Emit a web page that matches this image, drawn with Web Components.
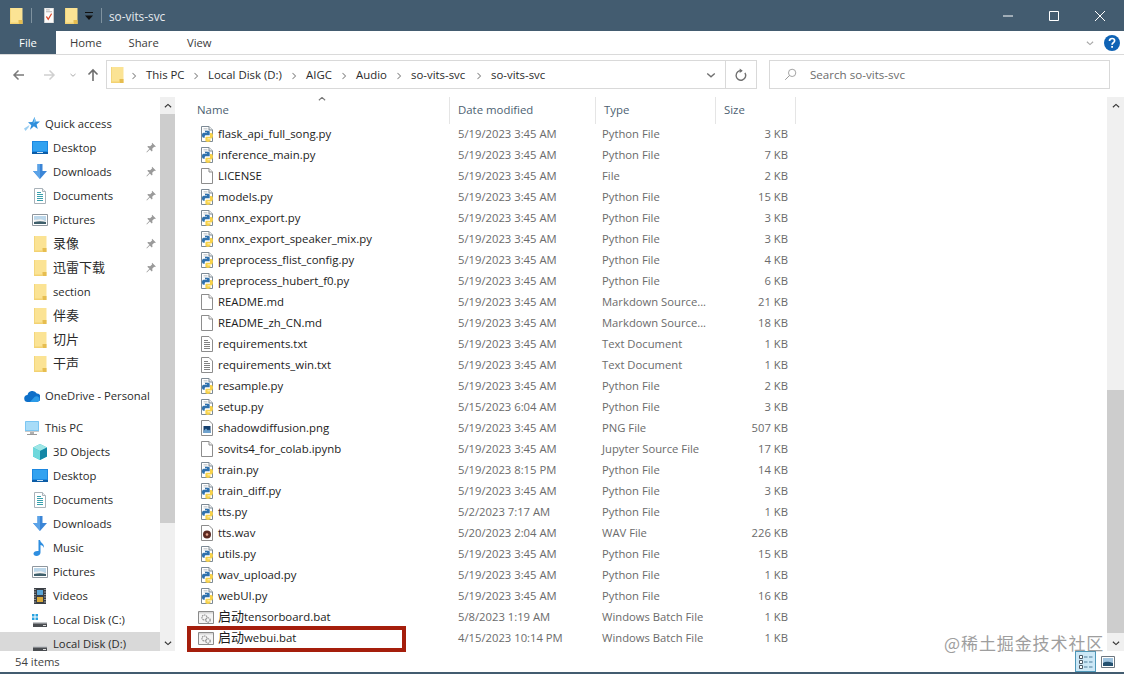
<!DOCTYPE html>
<html>
<head>
<meta charset="utf-8">
<title>so-vits-svc</title>
<style>
  html, body { margin: 0; height: 100%; overflow: hidden; background: #fff; }
  body { font: 11.25px "Open Sans", "Noto Sans CJK SC", sans-serif; color: #1f1f1f; }
  explorer-window { height: 674px; }
</style>
</head>
<body>
<explorer-window></explorer-window>

<script>
// all the little pictures, 16x16 box
const ICONS = {
  folder: `<path d="M2 0h12.500v16H2z" fill="#fbe394"/><path d="M2 0h1v16H2z" fill="#f3d67c"/><path d="M10.500 12h4v4h-4z" fill="#e6bd50"/><path d="M2 14.500h8.500V16H2z" fill="#f3d272"/>`,
  check: `<path d="M2 0h12v16H2z" fill="#fbfbfb" stroke="#cfcfcf"/><path d="M4 2h5M4 4h8" stroke="#aaa"/><path d="M4.500 9l2.500 3 4.500-6" fill="none" stroke="#d9492c" stroke-width="1.500"/>`,
  star: `<path d="M10.500 1l1.300 4.400 4.200.200-3.400 2.800 1.200 4.600-3.900-2.700L6 13.800l1.300-4.500L4 6.200l4.300-.300z" fill="#2f8fdc"/><path d="M10.500 1l1.300 4.400-2.500 2z" fill="#7cc4f2"/><path d="M0 12.500l5.500-3.500-1 2.500L1.500 15z" fill="#9ccff2"/>`,
  desktop: `<path d="M0 1h16v13H0z" fill="#1c87e0"/><path d="M1 2h14v9H1z" fill="#32a2f0"/><path d="M0 12h16v2H0z" fill="#0b5ca6"/><path d="M5 12.500h6" stroke="#cfe6f7"/>`,
  download: `<path d="M5.500 0h5v7H15l-7 8-7-8h4.500z" fill="#3b85d6"/><path d="M5.500 0h2.500v15l-7-8h4.500z" fill="#5ba3e8"/>`,
  docs: `<path d="M2.500.500h8l3 3v12h-11z" fill="#fff" stroke="#a9b2b9"/><path d="M10.500.500v3h3" fill="#eef1f3" stroke="#a9b2b9"/><path d="M5 4.500h4M5 6.500h6M5 8.500h6M5 10.500h6M5 12.500h6" stroke="#38a0ad"/>`,
  pictures: `<path d="M.500 2.500h15v11H.500z" fill="#fff" stroke="#8f979e"/><path d="M2 4h12v8H2z" fill="#bcd7ea"/><path d="M2 9c3-2 6-1 12 0v3H2z" fill="#3f5f6b"/><path d="M2 8c4-1 8-1 12 1v1c-4-1-8-1-12 0z" fill="#f4f4f4"/>`,
  cloud: `<path d="M4 14a3.500 3.500 0 0 1-.500-7 5 5 0 0 1 9.300-1.500A4 4 0 0 1 12.500 14z" fill="#0d6fc9"/><path d="M6 14l4.500-5a3 3 0 0 1 5 2.500c0 1.500-1 2.500-3 2.500z" fill="#2b9be8"/>`,
  pc: `<path d="M1.500 1h13a.500.500 0 0 1 .500.500V11H1V1.500z" fill="#7cc6f2"/><path d="M2 2h12v8H2z" fill="#a8dcf8"/><path d="M1 11h14v1H1z" fill="#c9c9c9"/><path d="M6 12h4v2H6z" fill="#b0b0b0"/><path d="M3 14.500h10" stroke="#999"/>`,
  cube: `<path d="M8 0l7 3.500v9L8 16l-7-3.500v-9z" fill="#2dc0c8"/><path d="M8 0l7 3.500L8 7 1 3.500z" fill="#9fe6e6"/><path d="M8 7v9l-7-3.500v-9z" fill="#6fd8dc"/><path d="M8 7v9l7-3.500v-9z" fill="#1487a6"/>`,
  music: `<path d="M6.500 0h1.500c.500 3 4.500 3.500 4 8-.500-2-2.500-3-3.500-3v7.500c0 2-2 3.500-4 3.500s-3-1-3-2.500 2-3 5-2.500z" fill="#2e8ee0"/>`,
  video: `<path d="M2 0h12v16H2z" fill="#3a3f45"/><path d="M5 2h6v5H5z" fill="#5aa6d8"/><path d="M5 9h6v5H5z" fill="#d8a93a"/><path d="M3 1v14M13 1v14" stroke="#e8e8e8" stroke-dasharray="1 1.500"/>`,
  diskc: `<path d="M1 10h14v5H1z" fill="#4a4d51"/><path d="M1 10h14v1.500H1z" fill="#c6c9cc"/><path d="M11 13.500h3" stroke="#ddd"/><path d="M0 2h2.500v2.500H0zM3.500 2H6v2.500H3.500zM0 5.500h2.500V8H0zM3.500 5.500H6V8H3.500z" fill="#27a2e0"/>`,
  diskd: `<path d="M1 10h14v5H1z" fill="#4a4d51"/><path d="M1 10h14v1.500H1z" fill="#c6c9cc"/><path d="M11 13.500h3" stroke="#ddd"/>`,
  page: `<path d="M2.500.500h7.500l3.500 3.500v11.500h-11z" fill="#fff" stroke="#8d8d8d"/><path d="M10 .500V4h3.500" fill="#f2f2f2" stroke="#8d8d8d"/>`,
  text: `<path d="M2.500.500h7.500l3.500 3.500v11.500h-11z" fill="#fff" stroke="#8d8d8d"/><path d="M5 4.500h4M5 6.500h6M5 8.500h6M5 10.500h6M5 12.500h6" stroke="#808080"/>`,
  python: `<path d="M2.500.500h7.500l3.500 3.500v11.500h-11z" fill="#fff" stroke="#7d8a95"/><path d="M10 .500V4h3.500" fill="#eee" stroke="#7d8a95"/><path d="M4.500 2.500h4M4.500 4h4" stroke="#b8bec3" stroke-width=".7"/><path d="M6 4.800h3.500c.800 0 1.200.600 1.200 1.300V9.200H7c-.800 0-1.300.500-1.300 1.200v1.300H4.500C3.500 11.700 3 10.700 3 9.200S3.500 6.700 4.500 6.700H8v-.500H6z" fill="#2f71ad"/><path d="M11 6.900h1.300c1 0 1.700 1.200 1.700 2.700s-.700 3-1.700 3H8.500v.600h3v1.600c0 .700-1.200 1.200-2.500 1.200s-2.600-.500-2.600-1.200V12c0-.700.500-1.200 1.200-1.200H11z" fill="#f7d24a"/>`,
  image: `<path d="M2.500.500h7.500l3.500 3.500v11.500h-11z" fill="#fff" stroke="#8d8d8d"/><path d="M4.500 6h7v7h-7z" fill="#16406e"/><path d="M4.500 11l2.500-2.500 2 2 1-1 1.500 1.500v2h-7z" fill="#6fa3cf"/>`,
  wav: `<path d="M2.500.500h7.500l3.500 3.500v11.500h-11z" fill="#fff" stroke="#8d8d8d"/><circle cx="8" cy="9.500" r="4" fill="#5b2a22"/><circle cx="8" cy="9.500" r="1.300" fill="#e8a48c"/>`,
  bat: `<path d="M.500 2.500h15v12H.500z" fill="#f4f4f4" stroke="#8a8a8a"/><path d="M1 3h14v1.500H1z" fill="#d5d5d5"/><circle cx="6.500" cy="8.500" r="2.500" fill="none" stroke="#8f8f8f" stroke-width="1.200" stroke-dasharray="1.500 .700"/><circle cx="10" cy="11" r="2.200" fill="#f4f4f4" stroke="#8f8f8f" stroke-width="1.200" stroke-dasharray="1.500 .700"/>`,
  pin: `<path d="M9.500 1l5 5-1.200.800-1-.600-2.700 2.700.400 2.800-1 1-2.600-2.800L2.500 14l-.600-.600 4-4.500L3.100 6.300l1-1 2.800.400 2.700-2.700-.600-1z" fill="#9a9a9a"/>`,
  back: `<path d="M13 8H3M7.500 3.500L3 8l4.500 4.500" fill="none" stroke="currentColor" stroke-width="1.500"/>`,
  forward: `<path d="M3 8h10M8.500 3.500L13 8l-4.500 4.500" fill="none" stroke="currentColor" stroke-width="1.500"/>`,
  up: `<path d="M8 14V3M3.500 7.500L8 3l4.500 4.500" fill="none" stroke="currentColor" stroke-width="1.600"/>`,
  chev: `<path d="M3 6l5 4.500L13 6" fill="none" stroke="currentColor" stroke-width="1.800"/>`,
  chevup: `<path d="M3 10l5-4.500 5 4.500" fill="none" stroke="currentColor" stroke-width="1.800"/>`,
  crumb: `<path d="M6 4l4 4-4 4" fill="none" stroke="currentColor" stroke-width="1.400"/>`,
  refresh: `<path d="M12.500 5.500a5.500 5.500 0 1 1-3.500-2.400" fill="none" stroke="currentColor" stroke-width="1.600"/><path d="M6.500 .500L10 3.200 6.500 5.800z" fill="currentColor"/>`,
  search: `<circle cx="10" cy="6" r="4.500" fill="none" stroke="currentColor"/><path d="M6.700 9.300L1.500 14.500" stroke="currentColor" stroke-width="1.100"/>`,
  help: `<circle cx="8" cy="8" r="8" fill="#0f63b5"/><path d="M5.500 6c0-1.500 1.100-2.500 2.600-2.500s2.500.900 2.500 2.200c0 2-2.500 2-2.500 4" fill="none" stroke="#fff" stroke-width="1.700"/><path d="M7.200 11h1.800v1.800H7.200z" fill="#fff"/>`,
  quickmenu: `<path d="M4 4.500h8" stroke="currentColor"/><path d="M4 7.500h8l-4 4.500z" fill="currentColor"/>`,
  min: `<path d="M3 8h10" stroke="currentColor" stroke-width="1"/>`,
  max: `<path d="M3.500 3.500h9v9h-9z" fill="none" stroke="currentColor"/>`,
  close: `<path d="M3 3l10 10M13 3L3 13" stroke="currentColor"/>`,
  details: `<path d="M1.500 1.500h3v3h-3zM1.500 6.500h3v3h-3zM1.500 11.500h3v3h-3z" fill="#fff" stroke="#4c5a66"/><path d="M6 3h3.500M11 3h3.500M6 8h3.500M11 8h3.500M6 13h3.500M11 13h3.500" stroke="#4c7c99"/>`,
  thumbs: `<path d="M1.500 2.500h13v11h-13z" fill="#fff" stroke="#6d7780"/><path d="M3 4h10v8H3z" fill="#9fc3de"/><path d="M3 9c3-2 6-1 10 0v3H3z" fill="#24506f"/>`
};

class WinIcon extends HTMLElement {
  connectedCallback() {
    const size = this.getAttribute('size') || 16;
    const h = this.getAttribute('h') || size;
    this.attachShadow({ mode: 'open' }).innerHTML = `
      <style>:host{display:inline-flex;flex:none;width:${size}px;height:${h}px} svg{display:block;width:100%;height:100%}</style>
      <svg viewBox="0 0 16 16" preserveAspectRatio="none">${ICONS[this.getAttribute('name')] || ''}</svg>`;
  }
}

class TitleBar extends HTMLElement {
  connectedCallback() {
    this.attachShadow({ mode: 'open' }).innerHTML = `
      <style>
        :host{display:flex;align-items:center;height:31px;background:#435c70;color:#fff;padding-left:8px}
        .sep{width:1px;height:15px;background:#7f929f;margin:0 11px 0 7px}
        .title{color:#e6ebef;margin-left:-4px;font-size:11.8px}
        .controls{margin-left:auto;display:flex;color:#fff;padding-right:16px;gap:30px}
      </style>
      <win-icon name="folder"></win-icon>
      <span class="sep"></span>
      <win-icon name="check" size="12" h="15"></win-icon>
      <win-icon name="folder" style="margin-left:8px"></win-icon>
      <win-icon name="quickmenu" style="margin-left:2px;color:#111"></win-icon>
      <span class="sep" style="margin-left:4px"></span>
      <span class="title"><slot></slot></span>
      <div class="controls">
        <win-icon name="min"></win-icon><win-icon name="max"></win-icon><win-icon name="close"></win-icon>
      </div>`;
  }
}

class RibbonTabs extends HTMLElement {
  connectedCallback() {
    this.attachShadow({ mode: 'open' }).innerHTML = `
      <style>
        :host{display:flex;align-items:center;height:23px;border-bottom:1px solid #dadada;color:#3b3b3b;background:#fff}
        .file{width:56px;height:100%;background:#435c70;color:#fff;display:flex;align-items:center;justify-content:center}
        .tab{margin-left:14px;width:44.500px}
        .right{margin-left:auto;display:flex;align-items:center;gap:9px;padding-right:4px;color:#a8a8a8}
      </style>
      <div class="file">File</div>
      <div class="tab">Home</div><div class="tab">Share</div><div class="tab">View</div>
      <div class="right"><win-icon name="chev" size="10"></win-icon><win-icon name="help"></win-icon></div>`;
  }
}

class AddressBar extends HTMLElement {
  connectedCallback() {
    // width of each crumb is the pitch to the next one, chevron hangs to its left
    const crumbs = [['This PC', 62], ['Local Disk (D:)', 98], ['AIGC', 50], ['Audio', 55], ['so-vits-svc', 80], ['so-vits-svc', 80]];
    const crumbHtml = crumbs.map(([t, w]) => `<span class="crumb" style="width:${w}px"><span>${t}</span><win-icon name="crumb" size="12" class="gt"></win-icon></span>`).join('');
    this.attachShadow({ mode: 'open' }).innerHTML = `
      <style>
        :host{display:flex;align-items:center;height:42px;box-sizing:border-box;padding:5px 14px 8px 11px;background:#fff;font-size:11.400px}
        .nav{display:flex;align-items:center;width:95px;flex:none}
        .box{display:flex;align-items:center;height:100%;box-sizing:border-box;border:1px solid #d9d9d9}
        .path{width:651px;flex:none;color:#2b2b2b}
        .crumbs{display:flex;margin-left:21px}
        .crumb{position:relative;display:block;white-space:nowrap}
        .gt{position:absolute;left:-18px;top:3px;color:#8c8c8c}
        .refresh{width:30px;height:100%;border-left:1px solid #d9d9d9;display:flex;align-items:center;justify-content:center;color:#707070}
        .search{margin-left:12px;flex:1;color:#6d6d6d;font-size:11.600px}
      </style>
      <div class="nav">
        <win-icon name="back" style="color:#7a7a7a"></win-icon>
        <win-icon name="forward" style="color:#d0d0d0;margin-left:14px"></win-icon>
        <win-icon name="chev" size="8" style="color:#a0a0a0;margin-left:12px"></win-icon>
        <win-icon name="up" style="color:#6e6e6e;margin-left:8px"></win-icon>
      </div>
      <div class="box path">
        <win-icon name="folder" style="margin-left:2px"></win-icon>
        <div class="crumbs">${crumbHtml}</div>
        <win-icon name="chev" size="12" style="margin-left:auto;margin-right:8px;color:#6f6f6f"></win-icon>
        <div class="refresh"><win-icon name="refresh" size="14"></win-icon></div>
      </div>
      <div class="box search">
        <win-icon name="search" size="13" style="margin:0 13px 0 14px;color:#8f8f8f"></win-icon><span>Search so-vits-svc</span>
      </div>`;
  }
}

class ScrollBar extends HTMLElement {
  connectedCallback() {
    const top = this.getAttribute('top'), len = this.getAttribute('len');
    this.attachShadow({ mode: 'open' }).innerHTML = `
      <style>
        :host{display:flex;flex-direction:column;flex:none;background:#f0f0f0;color:#333}
        .btn{height:17px;display:flex;align-items:center;justify-content:center;flex:none}
        .track{flex:1;position:relative}
        .thumb{position:absolute;left:0;right:0;top:${top}px;height:${len}px;background:#cdcdcd}
      </style>
      <div class="btn"><win-icon name="chevup" size="10"></win-icon></div>
      <div class="track"><div class="thumb"></div></div>
      <div class="btn"><win-icon name="chev" size="10"></win-icon></div>`;
  }
}

class NavItem extends HTMLElement {
  connectedCallback() {
    const pinned = this.hasAttribute('pinned');
    const lvl = this.getAttribute('level') === '0';
    this.attachShadow({ mode: 'open' }).innerHTML = `
      <style>
        :host{display:flex;align-items:center;height:24px;flex:none;padding-left:${lvl ? 24 : 32}px;color:#2a2a2a;white-space:nowrap}
        :host([selected]){background:#d9d9d9}
        .label{margin-left:5px;line-height:16px}
        .pin{margin-left:auto;margin-right:3px;display:flex}
      </style>
      <win-icon name="${this.getAttribute('icon')}"></win-icon>
      <span class="label"><slot></slot></span>
      ${pinned ? '<span class="pin"><win-icon name="pin" size="12"></win-icon></span>' : ''}`;
  }
}

// hanzi run a bit larger than the latin text next to them
const zh = s => s.replace(/[\u4e00-\u9fff]+/g, m => `<span style="font-size:13px;line-height:1;font-family:'Noto Sans CJK SC',sans-serif">${m}</span>`);

class NavPane extends HTMLElement {
  connectedCallback() {
    const groups = [
      [['star', 'Quick access', 0],
       ['desktop', 'Desktop', 1, 1], ['download', 'Downloads', 1, 1], ['docs', 'Documents', 1, 1], ['pictures', 'Pictures', 1, 1],
       ['folder', '录像', 1, 1], ['folder', '迅雷下载', 1, 1], ['folder', 'section', 1], ['folder', '伴奏', 1], ['folder', '切片', 1], ['folder', '干声', 1]],
      [['cloud', 'OneDrive - Personal', 0]],
      [['pc', 'This PC', 0],
       ['cube', '3D Objects', 1], ['desktop', 'Desktop', 1], ['docs', 'Documents', 1], ['download', 'Downloads', 1],
       ['music', 'Music', 1], ['pictures', 'Pictures', 1], ['video', 'Videos', 1], ['diskc', 'Local Disk (C:)', 1], ['diskd', 'Local Disk (D:)', 1, 0, 1]]
    ];
    const html = groups.map(g => '<div class="group">' + g.map(([icon, label, lvl, pin, sel]) =>
      `<nav-item icon="${icon}" level="${lvl}" ${pin ? 'pinned' : ''} ${sel ? 'selected' : ''}>${zh(label)}</nav-item>`).join('') + '</div>').join('');
    this.attachShadow({ mode: 'open' }).innerHTML = `
      <style>
        :host{display:flex;width:175px;flex:none;height:100%}
        .list{flex:1;min-width:0;overflow:hidden;padding-top:15px;display:flex;flex-direction:column;box-sizing:border-box}
        .group{display:flex;flex-direction:column;margin-bottom:8px;flex:none}
        scroll-bar{width:15px}
      </style>
      <div class="list">${html}</div>
      <scroll-bar top="0" len="409"></scroll-bar>`;
  }
}

class FileRow extends HTMLElement {
  connectedCallback() {
    const a = n => this.getAttribute(n);
    const bat = a('icon') === 'bat';
    this.attachShadow({ mode: 'open' }).innerHTML = `
      <style>
        :host{display:grid;grid-template-columns:261px 144px 120px 66px;height:21px;align-items:center;color:#6b6b6b;white-space:nowrap;line-height:16px}
        :host>div{padding-bottom:1px}
        .name{display:flex;align-items:center;color:#1c1c1c;font-size:11.400px;padding-left:${bat ? 1 : 2}px}
        .name span{margin-left:${bat ? 4 : 3}px}
        .size{text-align:right}
      </style>
      <div class="name"><win-icon name="${a('icon')}"></win-icon><span><slot></slot></span></div>
      <div>${a('date')}</div><div>${a('type')}</div><div class="size">${a('size')}</div>`;
  }
}

class FileList extends HTMLElement {
  connectedCallback() {
    const py = 'Python File', d = '5/19/2023 3:45 AM';
    const files = [
      ['python', 'flask_api_full_song.py', d, py, '3 KB'],
      ['python', 'inference_main.py', d, py, '7 KB'],
      ['page', 'LICENSE', d, 'File', '2 KB'],
      ['python', 'models.py', d, py, '15 KB'],
      ['python', 'onnx_export.py', d, py, '3 KB'],
      ['python', 'onnx_export_speaker_mix.py', d, py, '3 KB'],
      ['python', 'preprocess_flist_config.py', d, py, '4 KB'],
      ['python', 'preprocess_hubert_f0.py', d, py, '6 KB'],
      ['page', 'README.md', d, 'Markdown Source...', '21 KB'],
      ['page', 'README_zh_CN.md', d, 'Markdown Source...', '18 KB'],
      ['text', 'requirements.txt', d, 'Text Document', '1 KB'],
      ['text', 'requirements_win.txt', d, 'Text Document', '1 KB'],
      ['python', 'resample.py', d, py, '2 KB'],
      ['python', 'setup.py', '5/15/2023 6:04 AM', py, '3 KB'],
      ['image', 'shadowdiffusion.png', d, 'PNG File', '507 KB'],
      ['page', 'sovits4_for_colab.ipynb', d, 'Jupyter Source File', '17 KB'],
      ['python', 'train.py', '5/19/2023 8:15 PM', py, '14 KB'],
      ['python', 'train_diff.py', d, py, '3 KB'],
      ['python', 'tts.py', '5/2/2023 7:17 AM', py, '1 KB'],
      ['wav', 'tts.wav', '5/20/2023 2:04 AM', 'WAV File', '226 KB'],
      ['python', 'utils.py', d, py, '15 KB'],
      ['python', 'wav_upload.py', d, py, '1 KB'],
      ['python', 'webUI.py', d, py, '16 KB'],
      ['bat', '启动tensorboard.bat', '5/8/2023 1:19 AM', 'Windows Batch File', '1 KB'],
      ['bat', '启动webui.bat', '4/15/2023 10:14 PM', 'Windows Batch File', '1 KB']
    ];
    const rows = files.map(([icon, name, date, type, size]) =>
      `<file-row icon="${icon}" date="${date}" type="${type}" size="${size}">${zh(name)}</file-row>`).join('');
    this.attachShadow({ mode: 'open' }).innerHTML = `
      <style>
        :host{display:flex;flex:1;min-width:0;height:100%;position:relative}
        .pane{flex:1;min-width:0;padding-left:22px;overflow:hidden}
        .head{display:grid;grid-template-columns:253px 146px 120px 80px;width:max-content;height:27px;color:#4d5f72;font-size:11.400px;position:relative}
        .head div{display:flex;align-items:center;border-right:1px solid #e5e5e5;box-sizing:border-box;padding-bottom:2px}
        .head div+div{padding-left:8px}
        .sort{position:absolute;left:120px;top:-3px;color:#777}
        .rows{display:flex;flex-direction:column}
        scroll-bar{width:17px}
        .mark{position:absolute;left:12px;top:529px;width:219px;height:26px;box-sizing:border-box;border:4px solid #a51e0c;pointer-events:none}
      </style>
      <div class="pane">
        <div class="head"><win-icon class="sort" name="chevup" size="10"></win-icon>
          <div>Name</div><div>Date modified</div><div>Type</div><div>Size</div></div>
        <div class="rows">${rows}</div>
      </div>
      <scroll-bar top="276" len="243"></scroll-bar>
      <div class="mark"></div>`;
  }
}

class StatusBar extends HTMLElement {
  connectedCallback() {
    this.attachShadow({ mode: 'open' }).innerHTML = `
      <style>
        :host{display:flex;align-items:center;height:21px;padding-left:15px;color:#3f3f3f;background:#fff}
        .views{margin-left:auto;display:flex;align-items:center;height:100%;padding-right:8px}
        .on{width:21px;height:21px;box-sizing:border-box;background:#cce8f7;border:1px solid #4d97b8;display:flex;align-items:center;justify-content:center}
      </style>
      <span><slot></slot></span>
      <div class="views">
        <div class="on"><win-icon name="details"></win-icon></div>
        <win-icon name="thumbs" style="margin-left:4px"></win-icon>
      </div>`;
  }
}

class ExplorerWindow extends HTMLElement {
  connectedCallback() {
    this.attachShadow({ mode: 'open' }).innerHTML = `
      <style>
        :host{display:flex;flex-direction:column;width:1124px;position:relative;overflow:hidden;border-bottom:2px solid #435c70;box-sizing:border-box}
        .main{flex:1;min-height:0;display:flex}
        .stamp{position:absolute;left:944px;top:630px;font-size:17px;color:#8e8e8e;opacity:.85;white-space:nowrap;font-family:"Noto Sans CJK SC",sans-serif;letter-spacing:.9px}
      </style>
      <title-bar>so-vits-svc</title-bar>
      <ribbon-tabs></ribbon-tabs>
      <address-bar></address-bar>
      <div class="main"><nav-pane></nav-pane><file-list></file-list></div>
      <status-bar>54 items</status-bar>
      <div class="stamp">@稀土掘金技术社区</div>`;
  }
}

customElements.define('win-icon', WinIcon);
customElements.define('scroll-bar', ScrollBar);
customElements.define('title-bar', TitleBar);
customElements.define('ribbon-tabs', RibbonTabs);
customElements.define('address-bar', AddressBar);
customElements.define('nav-item', NavItem);
customElements.define('nav-pane', NavPane);
customElements.define('file-row', FileRow);
customElements.define('file-list', FileList);
customElements.define('status-bar', StatusBar);
customElements.define('explorer-window', ExplorerWindow);
</script>
</body>
</html>
